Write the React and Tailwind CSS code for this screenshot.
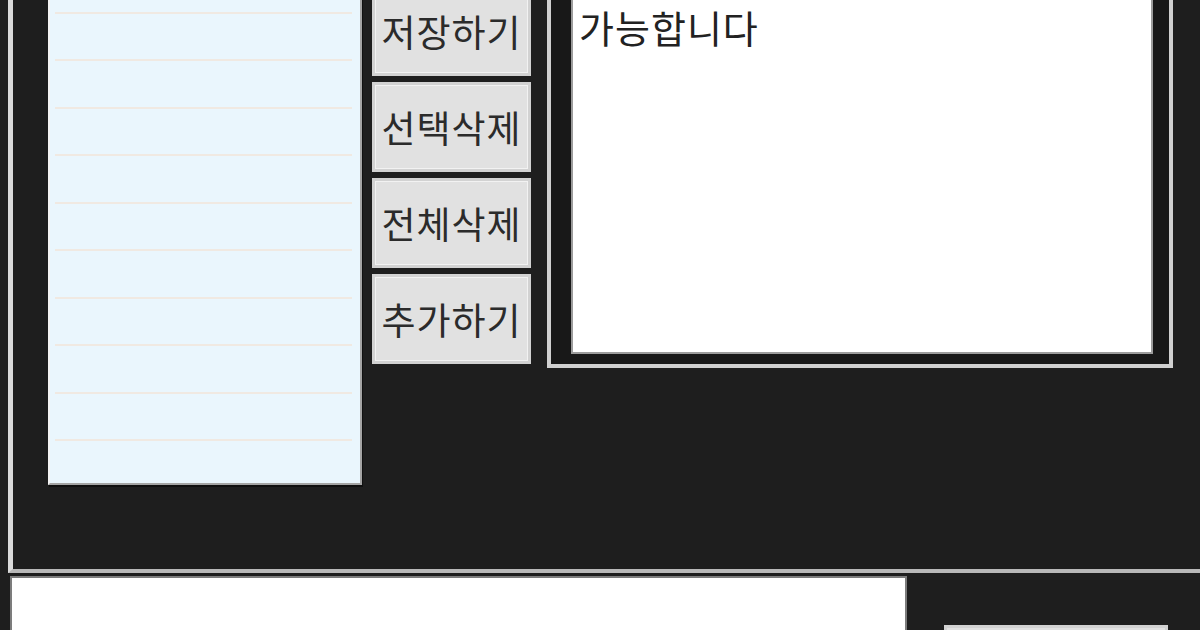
import React from 'react'

const rows = Array.from({ length: 11 })
const buttons = ['저장하기', '선택삭제', '전체삭제', '추가하기']

function ListBox() {
  return (
    <div className="ml-[35px] -mt-[36px] w-[314px] h-[521px] shrink-0 overflow-hidden bg-[#eaf6fd] border-2 border-t-[#f4f4f4] border-l-[#f4f4f4] border-r-[#a4a4a4] border-b-[#a4a4a4] pl-[5px] pr-[8px] shadow-[1px_2px_0_#101010]">
      {rows.map((_, i) => (
        <div key={i} className="h-[47.5px] border-b-2 border-[#f0e9e2]"></div>
      ))}
    </div>
  )
}

function SideButtons() {
  return (
    <div className="ml-[10px] -mt-[14px] w-[159px] shrink-0 flex flex-col gap-[6px]">
      {buttons.map((label) => (
        <div
          key={label}
          className="h-[90px] flex items-center justify-center bg-[#e1e1e1] border-[3px] border-[#d2d2d2] shadow-[inset_0_0_0_1px_#f2f2f2] text-[37px] tracking-[1px] leading-none text-[#2b2b2b]"
        >
          {label}
        </div>
      ))}
    </div>
  )
}

function MemoPanel() {
  return (
    <div className="ml-[16px] -mt-[60px] w-[626px] h-[428px] shrink-0 flex flex-col border-[4px] border-[#d0d0d0] bg-[#181818] pl-[20px] pr-[16px] pb-[10px]">
      <div className="flex-1 bg-white border-2 border-[#9c9c9c] pl-[6px]">
        <div className="mt-[62px] text-[38px] tracking-[1px] leading-none text-[#222]">가능합니다</div>
      </div>
    </div>
  )
}

export default function App() {
  return (
    <div className="w-[1200px] h-[630px] overflow-hidden bg-[#1e1e1e] font-['Noto_Sans_CJK_KR',sans-serif]">
      <div className="ml-[8px] h-[573px] border-l-[5px] border-b-[4px] border-l-[#dadada] border-b-[#b9b9b9] flex items-start">
        <ListBox />
        <SideButtons />
        <MemoPanel />
      </div>
      <div className="flex items-start">
        <div className="ml-[10px] mt-[3px] w-[897px] h-[80px] shrink-0 bg-white border-2 border-[#7c7c7c]"></div>
        <div className="ml-[37px] mt-[52px] w-[224px] h-[60px] shrink-0 bg-[#e1e1e1] border-[3px] border-[#d2d2d2]"></div>
      </div>
    </div>
  )
}
